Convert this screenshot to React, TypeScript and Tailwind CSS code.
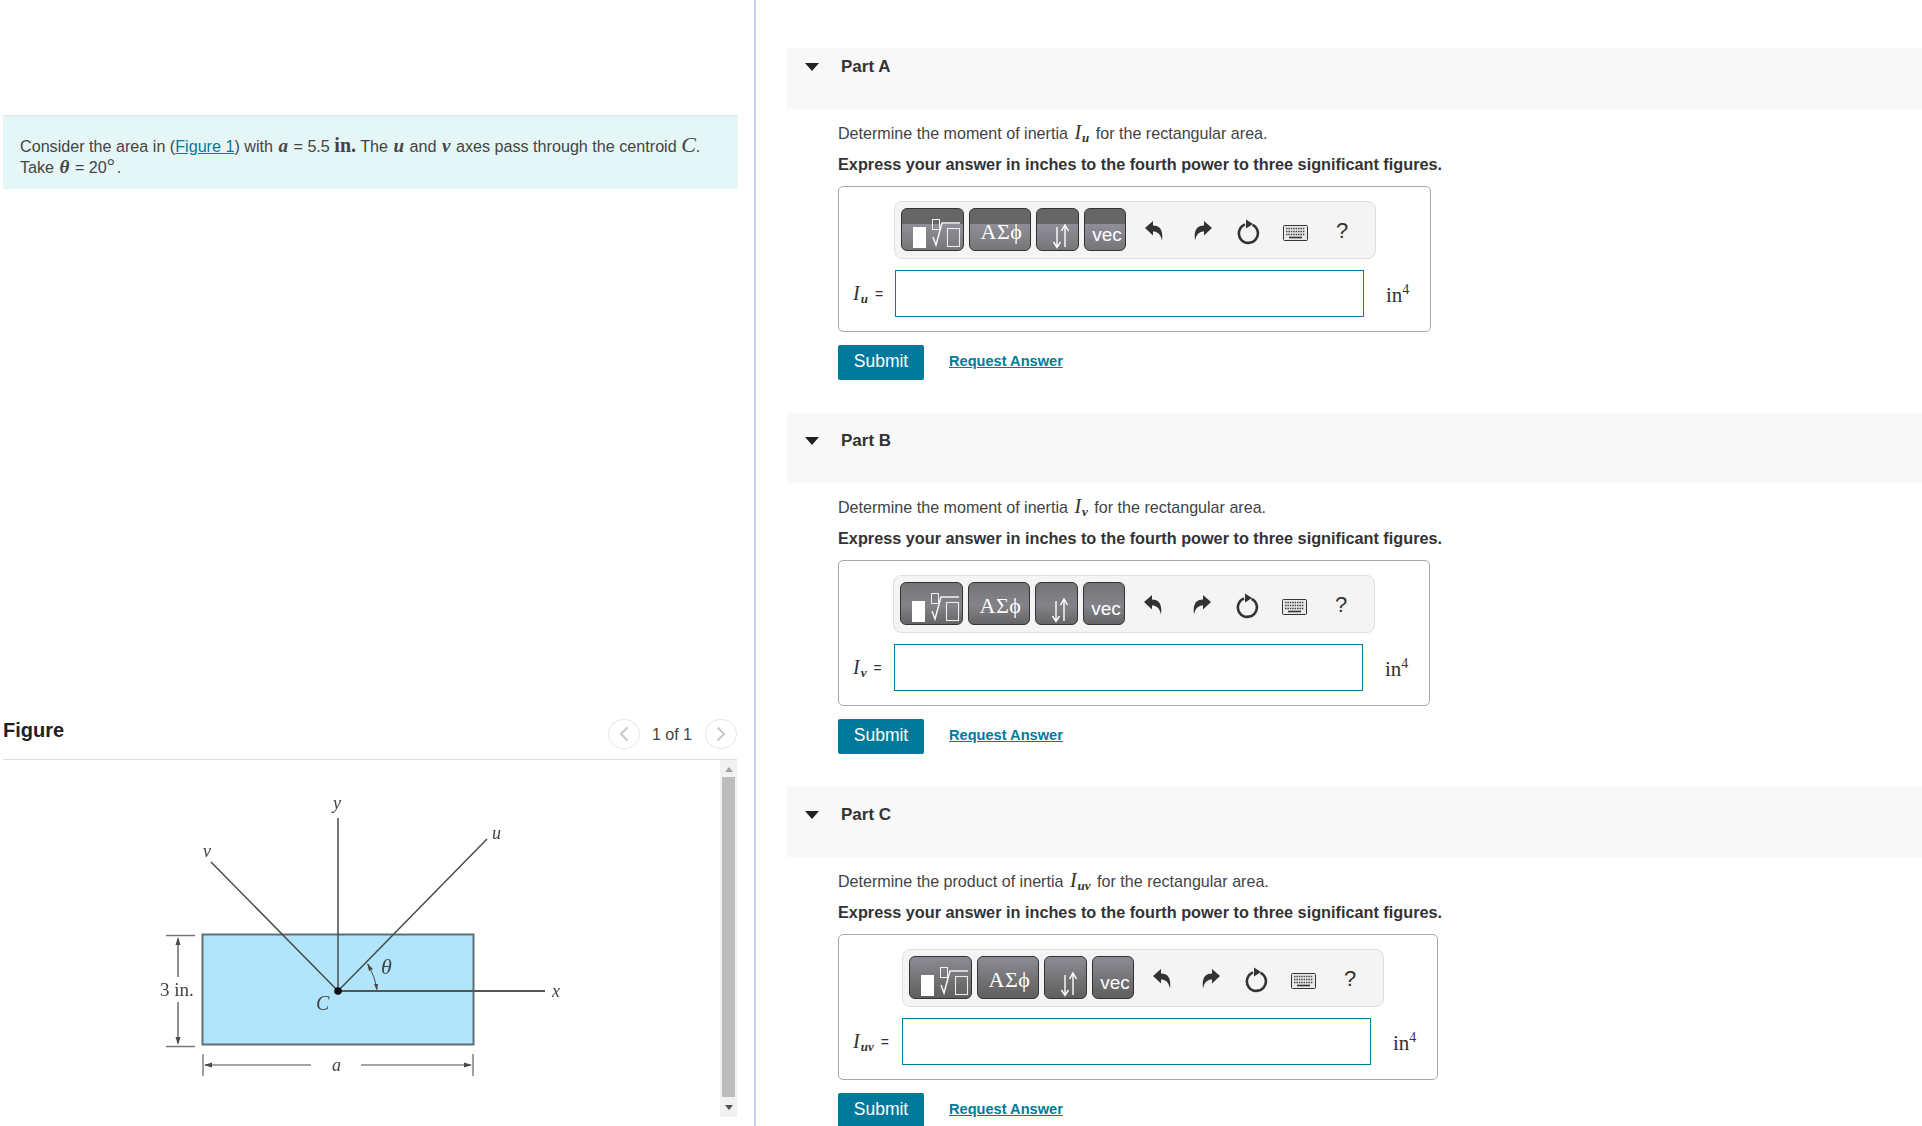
import React from "react";

function V({ children, b }: { children: React.ReactNode; b?: boolean }) {
  return (
    <span className={`font-['Liberation_Serif',serif] italic text-[19px] leading-none mx-[1px] ${b ? "font-bold" : ""}`}>
      {children}
    </span>
  );
}

function ISub({ s }: { s: string }) {
  return (
    <span className="font-['Liberation_Serif',serif] italic text-[20px] leading-none text-[#333] mx-[2px]">
      I
      <sub className="text-[13px] font-bold align-[-3px] bottom-0 leading-none ml-[1px]">{s}</sub>
    </span>
  );
}

function TBtn({ w, bg, children }: { w: string; bg: string; children: React.ReactNode }) {
  return (
    <div className={`${w} ${bg} h-[43px] rounded-[6px] border border-[#333] flex items-end justify-center overflow-hidden text-white shrink-0`}>
      {children}
    </div>
  );
}

function Toolbar({ bg, w }: { bg: string; w: string }) {
  return (
    <div className={`${w} h-[58px] bg-[#f4f4f4] border border-[#e0e0e0] rounded-[8px] flex items-center pl-[6px]`}>
      <div className="flex gap-[5px] mt-[-1px]">
        <TBtn w="w-[63px]" bg={bg}>
          <svg width="61" height="41" viewBox="0 0 61 41" fill="none">
            <rect x="11" y="18" width="13" height="21" fill="#fff" />
            <rect x="30.5" y="10.5" width="7" height="10" stroke="#f0f0f0" strokeWidth="1" />
            <path d="M31 28 L34 36 L40 14 H58" stroke="#f4f4f4" strokeWidth="1.5" />
            <rect x="45.5" y="19.5" width="12" height="18" stroke="#ececec" strokeWidth="1.1" />
          </svg>
        </TBtn>
        <TBtn w="w-[62px]" bg={bg}>
          <span className="font-['Liberation_Serif',serif] text-[22px] leading-[33px] h-[35px] pl-[3px] tracking-[0.5px]">ΑΣϕ</span>
        </TBtn>
        <TBtn w="w-[43px]" bg={bg}>
          <svg width="30" height="28" viewBox="0 0 30 28" fill="none" stroke="#fff" strokeWidth="1.4" className="ml-[8px]">
            <path d="M10 5 V24 M6.5 20 L10 25.5 L13.5 20" />
            <path d="M18 25 V4 M14.5 9 L18 3 L21.5 9" />
          </svg>
        </TBtn>
        <TBtn w="w-[42px]" bg={bg}>
          <span className="font-['Liberation_Sans',sans-serif] text-[19px] leading-[33px] h-[32px] pl-[4px]">vec</span>
        </TBtn>
      </div>
      <div className="flex items-center text-[#333] ml-[19px]">
        <svg width="18" height="21" viewBox="0 0 18 21" className="mr-[31px] mt-[1px]">
          <path d="M0 8 L8 1 V5.5 C14 5.5 18.5 9 17 20.5 C15.5 14 12.5 11.5 8 11.5 V15.5 Z" fill="#333" />
        </svg>
        <svg width="18" height="21" viewBox="0 0 18 21" className="mr-[25px] mt-[1px]">
          <path d="M18 8 L10 1 V5.5 C4 5.5 -0.5 9 1 20.5 C2.5 14 5.5 11.5 10 11.5 V15.5 Z" fill="#333" />
        </svg>
        <svg width="24" height="28" viewBox="0 0 24 28" fill="none" className="mr-[22px] mt-[5px]">
          <path d="M15.5 5.8 A9.5 9.5 0 1 1 8 5.5" stroke="#333" strokeWidth="2.6" />
          <path d="M9 0.5 L16 5 L9 9.5 Z" fill="#333" />
        </svg>
        <svg width="25" height="17" viewBox="0 0 25 17" className="mr-[28px] mt-[7px]">
          <rect x="0.5" y="0.5" width="24" height="15" rx="1" fill="#e8e8e8" stroke="#333" />
          <path d="M3 3.5 H22 M3 6.5 H22 M3 9.5 H22" stroke="#444" strokeWidth="1.5" strokeDasharray="1.5 0.9" />
          <path d="M6 12.5 H19" stroke="#333" strokeWidth="1.6" />
        </svg>
        <span className="font-['Liberation_Sans',sans-serif] text-[22px] text-[#333] leading-none mt-[2px]">?</span>
      </div>
    </div>
  );
}

function Part(props: {
  title: string;
  headH: string;
  headPt: string;
  sym: string;
  what: string;
  boxW: string;
  bg: string;
  labelPl: string;
  labelW: string;
  mt: string;
}) {
  return (
    <section className={props.mt}>
      <div className={`${props.headH} ${props.headPt} bg-[#f8f8f8] flex items-start`}>
        <svg width="14" height="8" viewBox="0 0 14 8" className="ml-[18px] mt-[6px] shrink-0">
          <path d="M0 0 H14 L7 8 Z" fill="#222" />
        </svg>
        <h2 className="ml-[22px] text-[17px] leading-[20px] font-bold text-[#333]">{props.title}</h2>
      </div>
      <div className="ml-[51px]">
        <p className="mt-[12px] text-[16.1px] leading-[24px] text-[#444]">
          Determine the {props.what} of inertia <ISub s={props.sym} /> for the rectangular area.
        </p>
        <p className="mt-[7px] text-[16.25px] leading-[24px] font-bold text-[#333]">
          Express your answer in inches to the fourth power to three significant figures.
        </p>
        <div className={`${props.boxW} mt-[10px] h-[146px] border border-[#aaa] rounded-[5px] pt-[14px]`}>
          <div className={props.labelPl}>
            <Toolbar bg={props.bg} w="w-[482px]" />
          </div>
          <div className="flex items-center mt-[11px]">
            <span className={`${props.labelW} pl-[12px] whitespace-nowrap leading-none flex items-center gap-[5px] text-[14px] text-[#333] shrink-0`}>
              <ISub s={props.sym} /> =
            </span>
            <div className="w-[469px] h-[47px] border border-[#007b9e] bg-white shrink-0" />
            <span className="ml-[22px] mt-[2px] font-['Liberation_Serif',serif] text-[21px] text-[#333] leading-none">
              in<sup className="text-[14px] align-[8px] top-0 leading-none">4</sup>
            </span>
          </div>
        </div>
        <div className="flex items-center mt-[13px]">
          <button className="w-[86px] h-[35px] pb-[2px] bg-[#007a9c] rounded-[2px] text-white text-[17.5px]">Submit</button>
          <a className="ml-[25px] mb-[2px] text-[#007a9c] underline text-[14.6px] font-bold">Request Answer</a>
        </div>
      </div>
    </section>
  );
}

function Figure() {
  const ink = "#4a4a4a";
  return (
    <svg width="460" height="320" viewBox="0 0 460 320" className="blur-[0.35px]" fill="none">
      <rect x="62.5" y="153.5" width="271" height="110" fill="#b0e5fb" stroke="#5f6f77" strokeWidth="2" />
      <path d="M71 81 L198 210 M198 37 V210 M347 58 L198 210" stroke={ink} strokeWidth="1.5" />
      <path d="M198 210 H405" stroke="#555" strokeWidth="1.8" />
      <circle cx="198" cy="210" r="3.8" fill="#111" />
      <path d="M228 183 Q235 196 237 208" stroke={ink} strokeWidth="1" />
      <path d="M227 182 L233 188 L229 190 Z M237 210 L234 203 L238 203 Z" fill={ink} />
      <path d="M26 154.5 H55 M26 265.5 H55" stroke="#777" strokeWidth="1.4" />
      <path d="M38 158 V196 M38 221 V262" stroke={ink} strokeWidth="1.2" />
      <path d="M38 156 L35.5 164 H40.5 Z M38 264 L35.5 256 H40.5 Z" fill={ink} />
      <path d="M63 273 V295 M333 273 V295" stroke="#777" strokeWidth="1.4" />
      <path d="M65 284 H171 M221 284 H331" stroke={ink} strokeWidth="1.2" />
      <path d="M64 284 L72 281.5 V286.5 Z M332 284 L324 281.5 V286.5 Z" fill={ink} />
      <g fontFamily="Liberation Serif, serif" fill="#444" fontSize="18">
        <text x="193" y="28" fontStyle="italic">y</text>
        <text x="352" y="58" fontStyle="italic">u</text>
        <text x="63" y="76" fontStyle="italic">v</text>
        <text x="241" y="193" fontStyle="italic" fontSize="22">θ</text>
        <text x="412" y="216" fontStyle="italic">x</text>
        <text x="176" y="229" fontStyle="italic" fontSize="20">C</text>
        <text x="192" y="290" fontStyle="italic">a</text>
        <text x="20" y="215" fontSize="19">3 in.</text>
      </g>
    </svg>
  );
}

const GRAD_A = "bg-[linear-gradient(#666_0,#666_15px,#908f99_15px,#767679_100%)]";
const GRAD_B = "bg-[linear-gradient(#747478_0,#838389_55%,#656567_100%)]";
const GRAD_C = "bg-[linear-gradient(#8c8c94_0,#6c6c6e_70%,#5f5f60_100%)]";

export default function App() {
  return (
    <div className="w-[1922px] h-[1126px] overflow-hidden bg-white flex font-['Liberation_Sans',Arial,sans-serif]">
      <aside className="w-[756px] h-full border-r-2 border-[#c3d5e6] shrink-0 flex flex-col">
        <div className="mt-[115px] ml-[3px] w-[735px] h-[74px] bg-[#e5f6f7] border-t border-[#dde5e6] pl-[17px] pt-[18px] text-[16.15px] leading-[18px] text-[#444]">
          Consider the area in (<a className="text-[#007a9c] underline">Figure 1</a>) with <V b>a</V> = 5.5{" "}
          <span className="font-['Liberation_Serif',serif] font-bold text-[20px] leading-none">in.</span> The <V b>u</V> and <V b>v</V> axes pass through the centroid{" "}
          <span className="font-['Liberation_Serif',serif] italic text-[22px] leading-none">C</span>.
          <br />
          Take <V b>θ</V> = 20<span className="font-['Liberation_Serif',serif] text-[20px] leading-none">°</span>
          <span className="ml-[2px]">.</span>
        </div>
        <div className="mt-[526px] ml-[3px] w-[734px] h-[44px] flex items-start">
          <h3 className="text-[20px] font-bold text-[#222] leading-[28px] mt-[1px] flex-1">Figure</h3>
          <button className="w-[32px] h-[30px] mt-[4px] rounded-full border border-[#e6e6e6] flex items-center justify-center">
            <svg width="10" height="16" viewBox="0 0 10 16" fill="none"><path d="M8.5 1.5 L2 8 L8.5 14.5" stroke="#c8c8c8" strokeWidth="2" /></svg>
          </button>
          <span className="ml-[12px] mr-[13px] mt-[5px] text-[16px] leading-[30px] text-[#444]">1 of 1</span>
          <button className="w-[32px] h-[30px] mt-[4px] rounded-full border border-[#e6e6e6] flex items-center justify-center">
            <svg width="10" height="16" viewBox="0 0 10 16" fill="none"><path d="M1.5 1.5 L8 8 L1.5 14.5" stroke="#c8c8c8" strokeWidth="2" /></svg>
          </button>
        </div>
        <div className="ml-[3px] w-[734px] h-[358px] border-t border-[#ddd] flex">
          <div className="flex-1 pl-[137px] pt-[21px]">
            <Figure />
          </div>
          <div className="w-[17px] bg-[#f1f1f1] flex flex-col items-center">
            <svg width="8" height="5" viewBox="0 0 8 5" className="mt-[7px] mb-[5px]"><path d="M0 5 L4 0 L8 5 Z" fill="#a3a3a3" /></svg>
            <div className="w-[13px] h-[320px] bg-[#bdbdbd]" />
            <svg width="8" height="5" viewBox="0 0 8 5" className="mt-[8px]"><path d="M0 0 L4 5 L8 0 Z" fill="#505050" /></svg>
          </div>
        </div>
      </aside>
      <main className="flex-1 min-w-0 pl-[31px] pt-[48px]">
        <Part title="Part A" headH="h-[61px]" headPt="pt-[9px]" sym="u" what="moment" boxW="w-[593px]" bg={GRAD_A} labelPl="pl-[55px]" labelW="w-[56px]" mt="" />
        <Part title="Part B" headH="h-[70px]" headPt="pt-[18px]" sym="v" what="moment" boxW="w-[592px]" bg={GRAD_B} labelPl="pl-[54px]" labelW="w-[55px]" mt="mt-[33px]" />
        <Part title="Part C" headH="h-[71px]" headPt="pt-[19px]" sym="uv" what="product" boxW="w-[600px]" bg={GRAD_C} labelPl="pl-[63px]" labelW="w-[63px]" mt="mt-[32px]" />
      </main>
    </div>
  );
}
